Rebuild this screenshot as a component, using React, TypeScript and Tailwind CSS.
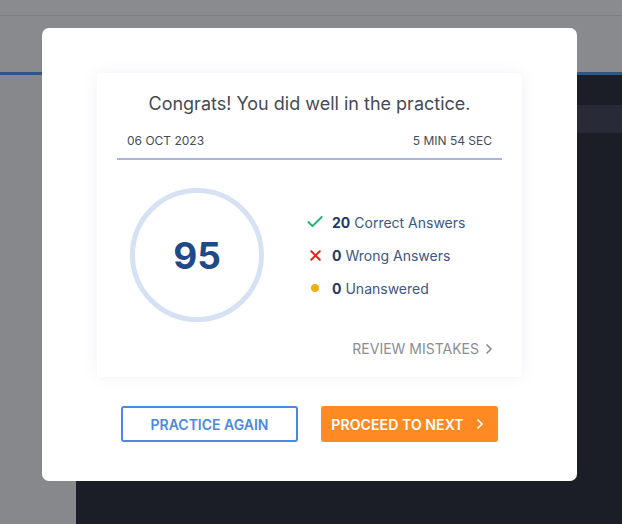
import { Check, X, ChevronRight } from "lucide-react";

const stats = [
  { icon: "check", count: 20, label: "Correct Answers" },
  { icon: "x", count: 0, label: "Wrong Answers" },
  { icon: "dot", count: 0, label: "Unanswered" },
];

const StatIcon = ({ kind }: { kind: string }) => {
  if (kind === "check") return <Check className="w-[20px] h-[20px] text-[#20b36c]" strokeWidth={2.3} />;
  if (kind === "x") return <X className="w-[17px] h-[17px] text-[#e0281d]" strokeWidth={2.8} />;
  return <div className="w-[8px] h-[8px] rounded-full bg-[#ebb112]"></div>;
};

export default function App() {
  return (
    <div className="relative w-[622px] h-[524px] overflow-hidden font-['Inter',sans-serif]">
      {/* dimmed page behind */}
      <div className="flex flex-col h-full">
        <div className="h-[16px] bg-[#898b8f] border-b border-[#7e8084]"></div>
        <div className="h-[56px] bg-[#888a8e]"></div>
        <div className="h-[3px] bg-[#2d5789]"></div>
        <div className="flex flex-1">
          <div className="w-[76px] bg-[#86888c]"></div>
          <div className="flex-1 bg-[#1b1e27] flex flex-col">
            <div className="h-[30px]"></div>
            <div className="h-[28px] bg-[#282b37]"></div>
          </div>
        </div>
      </div>

      {/* modal */}
      <div className="absolute left-[42px] top-[28px] w-[535px] h-[453px] bg-white rounded-[7px] px-[55px] pt-[45px] flex flex-col">
        <div className="bg-white rounded-[4px] shadow-[0_0_14px_rgba(120,130,200,0.12)] h-[304px] px-[20px] pt-[18px] flex flex-col">
          <div className="text-center text-[18px] leading-[26px] text-[#454a55]">
            Congrats! You did well in the practice.
          </div>
          <div className="mt-[15px] flex justify-between px-[10px] pb-[8px] border-b-2 border-[#aab2de] text-[12px] leading-[18px] text-[#484c58]">
            <span>06 OCT 2023</span>
            <span>5 MIN 54 SEC</span>
          </div>
          <div className="flex items-center mt-[28px]">
            <div className="ml-[13px] w-[134px] h-[134px] rounded-full border-[5px] border-[#d6e1f4] flex items-center justify-center">
              <span className="text-[37px] font-bold text-[#1e4a8c] leading-none">95</span>
            </div>
            <div className="ml-[41px] flex flex-col gap-[13px]">
              {stats.map((s) => (
                <div key={s.label} className="flex items-center h-[20px] text-[14px]">
                  <div className="w-[20px] flex justify-center">
                    <StatIcon kind={s.icon} />
                  </div>
                  <span className="ml-[7px] font-bold text-[#1f3a6a]">{s.count}</span>
                  <span className="ml-[4px] text-[#3c5687]">{s.label}</span>
                </div>
              ))}
            </div>
          </div>
          <div className="flex justify-end items-center mt-[16px] pr-[5px] text-[14px] text-[#8a8d94] gap-[2px]">
            <span>REVIEW MISTAKES</span>
            <ChevronRight className="w-[16px] h-[16px]" strokeWidth={2.6} />
          </div>
        </div>

        <div className="flex justify-center gap-[23px] mt-[29px]">
          <button className="w-[177px] h-[36px] border-2 border-[#4b89df] rounded-[3px] text-[#4b89df] text-[14px] font-semibold">
            PRACTICE AGAIN
          </button>
          <button className="w-[177px] h-[36px] bg-[#ff8a24] rounded-[3px] text-white text-[14px] font-semibold tracking-[0.1px] flex items-center justify-center gap-[8px]">
            PROCEED TO NEXT
            <ChevronRight className="w-[16px] h-[16px]" strokeWidth={2.6} />
          </button>
        </div>
      </div>
    </div>
  );
}
